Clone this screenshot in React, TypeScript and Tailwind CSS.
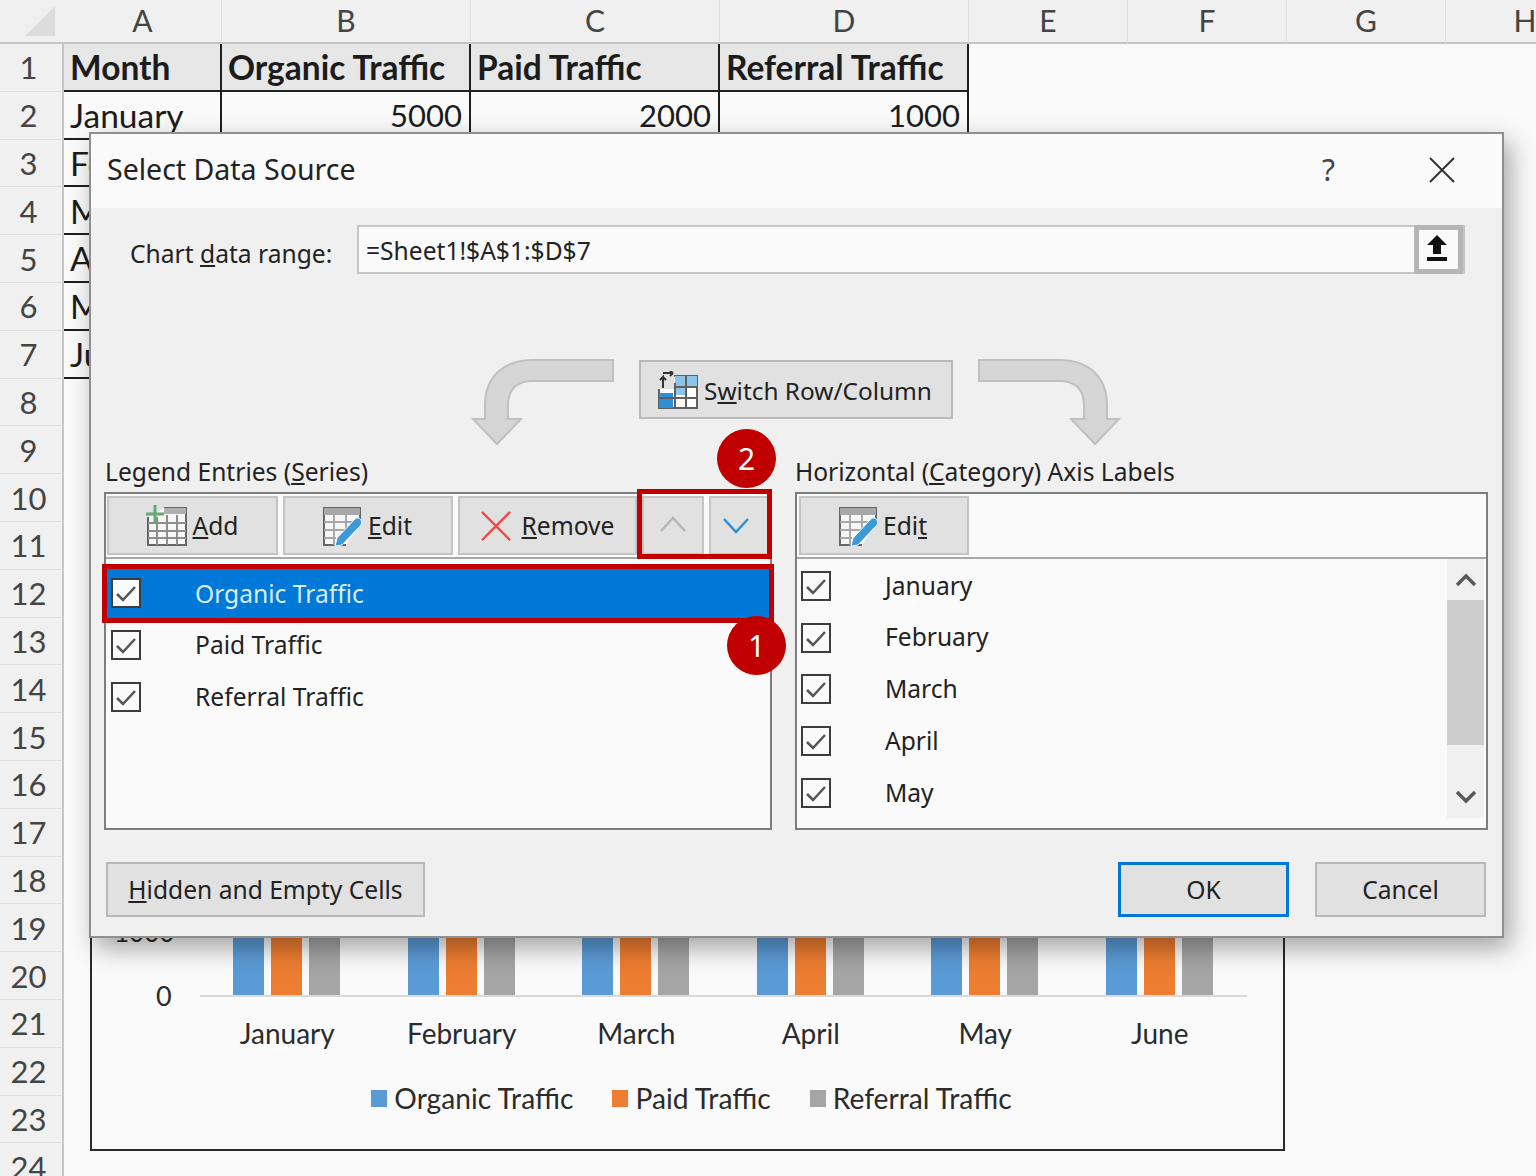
import React from "react";

const columns = ["A", "B", "C", "D", "E", "F", "G", "H"];
const rowNumbers = Array.from({ length: 24 }, (_, i) => i + 1);
const sheetRows: string[][] = [
  ["Month", "Organic Traffic", "Paid Traffic", "Referral Traffic"],
  ["January", "5000", "2000", "1000"],
  ["February", "", "", ""],
  ["March", "", "", ""],
  ["April", "", "", ""],
  ["May", "", "", ""],
  ["June", "", "", ""],
];
const months = ["January", "February", "March", "April", "May", "June"];

function AddIcon() {
  return (
    <svg width="42" height="42" viewBox="0 0 42 42" className="shrink-0">
      <path d="M2 12V40H40V3H18" fill="#f7f7f7" stroke="#666" strokeWidth="2" />
      <rect x="18" y="3" width="22" height="6" fill="#b0b0b0" />
      <path d="M2 18H40M2 26H40M2 33H40M11 12V40M21 10V40M31 10V40" stroke="#8d8d8d" strokeWidth="2" fill="none" />
      <path d="M9 0V18M0 9H18" stroke="#63a971" strokeWidth="3" fill="none" />
    </svg>
  );
}

function EditIcon() {
  return (
    <svg width="42" height="42" viewBox="0 0 42 42" className="shrink-0">
      <path d="M24 40H2V3H38V20" fill="#f7f7f7" stroke="#666" strokeWidth="2" />
      <rect x="2" y="3" width="36" height="7" fill="#a8a8a8" />
      <path d="M2 17H36M2 25H24M2 33H14M12 10V40M24 10V30" stroke="#a8a8a8" strokeWidth="2" fill="none" />
      <path d="M15 33L33 14C35 12 38 13 39 15C40 17 40 19 38 21L20 40L13 41Z" fill="#3d9ad9" stroke="#f7f7f7" strokeWidth="1" />
    </svg>
  );
}

function SwitchIcon() {
  return (
    <svg width="40" height="38" viewBox="0 0 40 38" className="shrink-0">
      <rect x="1" y="5" width="38" height="32" fill="#fff" stroke="#5f5f5f" strokeWidth="2" />
      <path d="M17 5H39V16H29V24H17Z" fill="#8cc4ea" />
      <path d="M1 22H15V37H1Z" fill="#2f8fd6" />
      <path d="M15 16H39M1 27H39M17 12V37M28 5V37" stroke="#5f5f5f" strokeWidth="2" fill="none" />
      <rect x="0" y="0" width="16" height="18" fill="#e1e1e1" />
      <path d="M5 17V6L2 9M5 6L8 9M5 2H15M15 2L12 0M15 2L12 5" stroke="#333" strokeWidth="2" fill="none" />
    </svg>
  );
}

function Check() {
  return (
    <span className="flex h-[30px] w-[30px] shrink-0 items-center justify-center border-2 border-[#3c3c3c] bg-[#fafafa]">
      <svg width="24" height="24" viewBox="0 0 24 24">
        <path d="M3 13L9 19L21 6" stroke="#555" strokeWidth="2.500" fill="none" />
      </svg>
    </span>
  );
}

function CurveArrow({ flip }: { flip?: boolean }) {
  return (
    <svg width="144" height="90" viewBox="0 0 144 90" className={flip ? "shrink-0 -scale-x-100" : "shrink-0"}>
      <path
        d="M142 3V24H62C46 24 38 32 37 46V62H50L26 87L2 62H14V46C15 20 32 3 62 3Z"
        fill="#d6d6d6"
        stroke="#c0c0c0"
        strokeWidth="2"
      />
    </svg>
  );
}

function Bar({ color }: { color: string }) {
  return <div className={color + " w-[31px]"} />;
}

export default function App() {
  return (
    <div className="relative h-[1176px] w-[1536px] overflow-hidden bg-[#fafafa] font-['Lato',sans-serif] text-[#1c1c1c]">
      {/* Worksheet */}
      <div className="grid w-max grid-cols-[64px_158px_249px_249px_249px_159px_159px_159px_159px] grid-rows-[44px_repeat(24,47.800px)]">
        <div className="relative border-b-2 border-[#c4c4c4] bg-[#f0f0f0]">
          <div className="absolute left-[25px] top-[6px] h-[30px] w-[30px] bg-[#dcdcdc] [clip-path:polygon(100%_0,100%_100%,0_100%)]" />
        </div>
        {columns.map((c) => (
          <div
            key={c}
            className="flex items-center justify-center border-b-2 border-r border-[#c4c4c4] border-r-[#e0e0e0] bg-[#f0f0f0] pb-[3px] text-[30px] leading-none text-[#444]"
          >
            {c}
          </div>
        ))}
        {rowNumbers.map((n) => {
          const row = sheetRows[n - 1];
          return (
            <React.Fragment key={n}>
              <div className="flex items-center justify-center border-b border-r-2 border-[#dedede] border-r-[#c4c4c4] bg-[#f0f0f0] pr-[5px] pt-[1px] text-[31px] leading-none text-[#444]">
                {n}
              </div>
              {[0, 1, 2, 3].map((i) => (
                <div
                  key={i}
                  className={
                    row
                      ? (n === 1 ? "bg-[#e7e7e7] font-bold " : "") +
                        "flex items-center overflow-hidden whitespace-nowrap border-b-2 border-r-2 border-[#1f1f1f] pt-[2px] leading-none " +
                        (i > 0 && n > 1 ? "justify-end pr-[7px] text-[31px]" : "pl-[6px] text-[33.500px]")
                      : ""
                  }
                >
                  {row ? row[i] : null}
                </div>
              ))}
              <div />
              <div />
              <div />
              <div />
            </React.Fragment>
          );
        })}
      </div>

      {/* Chart behind the dialog */}
      <div className="absolute left-[90px] top-[880px] flex h-[271px] w-[1195px] flex-col border-2 border-[#2a2a2a] bg-[#fafafa] text-[#2b2b2b]">
        <div className="relative ml-[108px] mr-[36px] flex h-[115px] border-b-2 border-[#d9d9d9]">
          <span className="absolute -left-[44px] top-[100px] text-[27px] leading-none">0</span>
          <span className="absolute -left-[86px] top-[37px] text-[26px] leading-none">1000</span>
          {months.map((m) => (
            <div key={m} className="flex flex-1 justify-center gap-[7px] pr-[1px]">
              <Bar color="bg-[#5b9bd5]" />
              <Bar color="bg-[#ed7d31]" />
              <Bar color="bg-[#a5a5a5]" />
            </div>
          ))}
        </div>
        <div className="ml-[108px] mr-[36px] mt-[22px] flex text-[28px] leading-none">
          {months.map((m) => (
            <div key={m} className="flex-1 text-center">
              {m}
            </div>
          ))}
        </div>
        <div className="ml-[8px] mt-[37px] flex justify-center gap-[39px] text-[28.200px] leading-none">
          {[
            ["Organic Traffic", "bg-[#5b9bd5]"],
            ["Paid Traffic", "bg-[#ed7d31]"],
            ["Referral Traffic", "bg-[#a5a5a5]"],
          ].map(([label, color]) => (
            <div key={label} className="flex items-center gap-[7px]">
              <span className={color + " h-[17px] w-[16px]"} />
              <span>{label}</span>
            </div>
          ))}
        </div>
      </div>

      {/* Dialog */}
      <div className="absolute left-[89px] top-[132px] flex h-[806px] w-[1415px] flex-col border-2 border-[#8f8f8f] bg-[#f0f0f0] font-['Noto_Sans',sans-serif] text-[24.600px] leading-none text-[#222] shadow-[6px_10px_24px_rgba(0,0,0,0.35)]">
        <div className="flex h-[74px] shrink-0 items-center bg-[#fafafa] pb-[3px] pl-[16px]">
          <span className="flex-1 text-[28.500px]">Select Data Source</span>
          <span className="mr-[94px] text-[30px] text-[#444]">?</span>
          <svg width="26" height="26" viewBox="0 0 26 26" className="mr-[47px]">
            <path d="M1 1L25 25M25 1L1 25" stroke="#333" strokeWidth="2" />
          </svg>
        </div>

        <div className="mt-[17px] flex h-[49px] shrink-0 items-center">
          <span className="w-[266px] pl-[39px] pt-[9px]">
            Chart <u>d</u>ata range:
          </span>
          <div className="flex h-[49px] w-[1108px] items-center justify-between border-2 border-[#c6c6c6] bg-[#fafafa] pl-[7px]">
            <span className="pt-[4px]">=Sheet1!$A$1:$D$7</span>
            <div className="flex h-[49px] w-[49px] items-center justify-center border-[5px] border-[#b5b5b5] bg-[#fafafa] pr-[4px]">
              <svg width="22" height="26" viewBox="0 0 22 26" className="mb-[4px]">
                <path d="M11 0L21 10H15V19H7V10H1ZM1 22H21V26H1Z" fill="#111" />
              </svg>
            </div>
          </div>
        </div>

        <div className="ml-[380px] mt-[83px] flex h-[88px] shrink-0 items-start gap-[24px]">
          <CurveArrow />
          <div className="mt-[3px] flex h-[59px] w-[314px] items-center justify-center gap-[6px] border-2 border-[#b9b9b9] bg-[#e1e1e1] pr-[2px]">
            <SwitchIcon />
            <span className="pt-[4px] text-[24.400px]">
              S<u>w</u>itch Row/Column
            </span>
          </div>
          <CurveArrow flip />
        </div>

        <div className="mt-[13px] flex shrink-0 gap-[23px] pl-[13px]">
          <div className="w-[668px]">
            <div className="h-[30px] pl-[1px] pt-[2px]">
              Legend Entries (<u>S</u>eries)
            </div>
            <div className="mt-[4px] flex h-[338px] flex-col border-2 border-[#7d7d7d] bg-[#fafafa]">
              <div className="flex h-[65px] shrink-0 items-start gap-[5px] border-b-2 border-[#a8a8a8] pl-[1px] pt-[2px]">
                <div className="flex h-[59px] w-[171px] items-center justify-center gap-[5px] border-2 border-[#c4c4c4] bg-[#e1e1e1] pr-[1px]">
                  <AddIcon />
                  <span className="pt-[2px]">
                    <u>A</u>dd
                  </span>
                </div>
                <div className="flex h-[59px] w-[170px] items-center justify-center gap-[4px] border-2 border-[#c4c4c4] bg-[#e1e1e1] pr-[2px]">
                  <EditIcon />
                  <span className="pt-[2px]">
                    <u>E</u>dit
                  </span>
                </div>
                <div className="flex h-[59px] w-[179px] items-center justify-center gap-[11px] border-2 border-[#c4c4c4] bg-[#e1e1e1]">
                  <svg width="30" height="30" viewBox="0 0 32 32">
                    <path d="M1 1L31 31M31 1L1 31" stroke="#ee4c4c" strokeWidth="2.500" />
                  </svg>
                  <span className="pt-[2px]">
                    <u>R</u>emove
                  </span>
                </div>
                <div className="flex h-[59px] w-[62px] items-center justify-center border-2 border-[#c4c4c4] bg-[#e1e1e1]">
                  <svg width="26" height="16" viewBox="0 0 26 16" className="mb-[4px]">
                    <path d="M1 15L13 2L25 15" stroke="#b5b5b5" strokeWidth="2.500" fill="none" />
                  </svg>
                </div>
                <div className="flex h-[59px] w-[60px] items-center justify-center border-2 border-[#c4c4c4] bg-[#e1e1e1] pr-[6px]">
                  <svg width="26" height="16" viewBox="0 0 26 16">
                    <path d="M1 1L13 14L25 1" stroke="#2b8fd6" strokeWidth="2.500" fill="none" />
                  </svg>
                </div>
              </div>
              <div className="flex flex-col pt-[8px]">
                <div className="flex h-[52px] items-center gap-[54px] bg-[#0078d7] pl-[5px] text-[#d9ecfa]">
                  <Check />
                  <span className="pt-[2px]">Organic Traffic</span>
                </div>
                <div className="flex h-[52px] items-center gap-[54px] pl-[5px]">
                  <Check />
                  <span>Paid Traffic</span>
                </div>
                <div className="flex h-[52px] items-center gap-[54px] pl-[5px]">
                  <Check />
                  <span>Referral Traffic</span>
                </div>
              </div>
            </div>
          </div>

          <div className="w-[693px]">
            <div className="h-[30px] pt-[2px]">
              Horizontal (<u>C</u>ategory) Axis Labels
            </div>
            <div className="mt-[4px] flex h-[338px] flex-col border-2 border-[#7d7d7d] bg-[#fafafa]">
              <div className="flex h-[65px] shrink-0 items-start border-b-2 border-[#a8a8a8] pl-[2px] pt-[2px]">
                <div className="flex h-[59px] w-[170px] items-center justify-center gap-[3px] border-2 border-[#c4c4c4] bg-[#e1e1e1] pr-[3px]">
                  <EditIcon />
                  <span className="pt-[2px]">
                    Edi<u>t</u>
                  </span>
                </div>
              </div>
              <div className="flex min-h-0 flex-1">
                <div className="flex flex-1 flex-col pt-[1px]">
                  {["January", "February", "March", "April", "May"].map((m) => (
                    <div key={m} className="flex h-[51.800px] items-center gap-[54px] pl-[4px]">
                      <Check />
                      <span>{m}</span>
                    </div>
                  ))}
                </div>
                <div className="mb-[10px] mr-[2px] flex w-[37px] flex-col bg-[#f0f0f0]">
                  <div className="flex h-[41px] items-center justify-center">
                    <svg width="20" height="14" viewBox="0 0 20 14">
                      <path d="M1 12L10 3L19 12" stroke="#5a5a5a" strokeWidth="3.500" fill="none" />
                    </svg>
                  </div>
                  <div className="h-[145px] bg-[#cdcdcd]" />
                  <div className="flex flex-1 items-center justify-center pt-[30px]">
                    <svg width="20" height="14" viewBox="0 0 20 14">
                      <path d="M1 2L10 11L19 2" stroke="#5a5a5a" strokeWidth="3.500" fill="none" />
                    </svg>
                  </div>
                </div>
              </div>
            </div>
          </div>
        </div>

        <div className="mt-[32px] flex shrink-0 items-start pl-[15px] pr-[16px]">
          <div className="flex h-[55px] w-[319px] items-center justify-center border-2 border-[#b9b9b9] bg-[#e1e1e1]">
            <span className="pt-[2px]">
              <u>H</u>idden and Empty Cells
            </span>
          </div>
          <div className="ml-auto flex h-[55px] w-[171px] items-center justify-center border-[3px] border-[#0078d7] bg-[#e1e1e1] pt-[2px]">
            OK
          </div>
          <div className="ml-[26px] flex h-[55px] w-[171px] items-center justify-center border-2 border-[#b9b9b9] bg-[#e1e1e1] pt-[2px]">
            Cancel
          </div>
        </div>
      </div>

      {/* Red callouts laid over the dialog */}
      <div className="absolute left-[102px] top-[564px] h-[59px] w-[672px] border-[5px] border-[#c00000]" />
      <div className="absolute left-[637px] top-[489px] h-[70px] w-[135px] border-[5px] border-[#c00000]" />
      <div className="absolute left-[717px] top-[429px] flex h-[59px] w-[59px] items-center justify-center rounded-full bg-[#c00000] font-['Noto_Sans',sans-serif] text-[30px] leading-none text-white">
        2
      </div>
      <div className="absolute left-[727px] top-[616px] flex h-[59px] w-[59px] items-center justify-center rounded-full bg-[#c00000] font-['Noto_Sans',sans-serif] text-[30px] leading-none text-white">
        1
      </div>
    </div>
  );
}
